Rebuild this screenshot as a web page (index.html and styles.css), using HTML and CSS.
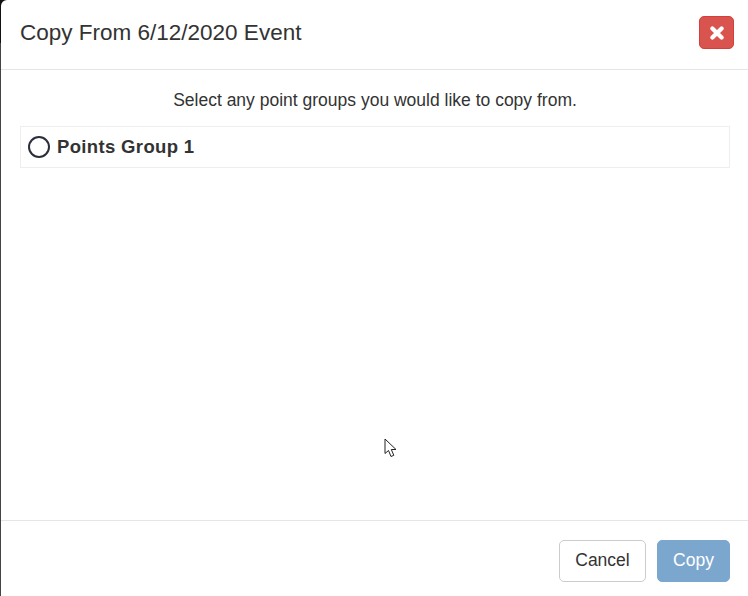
FILE: index.html
```html
<!DOCTYPE html>
<html lang="en">
<head>
    <meta charset="UTF-8">
    <title>Copy From Event</title>
    <link rel="stylesheet" href="styles.css">
</head>
<body>
    <div class="modal">
        <header class="modal-header">
            <h4 class="modal-title">Copy From 6/12/2020 Event</h4>
            <button class="btn-close" aria-label="Close">
                <svg width="14" height="14" viewBox="0 0 14 14">
                    <path d="M2.4 2.4 L11.6 11.6 M11.6 2.4 L2.4 11.6" stroke="#fff" stroke-width="4.2" stroke-linecap="round"/>
                </svg>
            </button>
        </header>

        <section class="modal-body">
            <p class="intro">Select any point groups you would like to copy from.</p>
            <div class="group-row">
                <span class="radio"></span>
                <span class="group-name">Points Group 1</span>
            </div>
        </section>

        <footer class="modal-footer">
            <button class="btn btn-default">Cancel</button>
            <button class="btn btn-primary">Copy</button>
        </footer>

        <!-- mouse pointer -->
        <svg class="cursor" width="14" height="21" viewBox="0 0 14 21">
            <path d="M1 1 L1 15.5 L4.5 12.5 L7 18.5 L9.8 17.3 L7.3 11.5 L12 11.5 Z" fill="#fff" stroke="#222" stroke-width="1" stroke-linejoin="miter"/>
        </svg>
    </div>
</body>
</html>
```

FILE: styles.css
```css
* {
    margin: 0;
    padding: 0;
    box-sizing: border-box;
    font-family: "Liberation Sans", Arial, sans-serif;
}

body {
    background: linear-gradient(#111 43px, #444 43px);
    height: 596px;
    overflow: hidden;
}

.modal {
    position: relative;
    display: flex;
    flex-direction: column;
    height: 596px;
    margin-left: 1px;
    background: #fff;
    border-top-left-radius: 6px;
    color: #333;
}

/* Header */
.modal-header {
    display: flex;
    justify-content: space-between;
    align-items: flex-start;
    height: 70px;
    padding: 16px 14px 0 19px;
    border-bottom: 1px solid #e5e5e5;
}

.modal-title {
    font-size: 22.5px;
    font-weight: 400;
    line-height: 34px;
}

.btn-close {
    display: flex;
    justify-content: center;
    align-items: center;
    width: 35px;
    height: 33px;
    background: #d9534f;
    border: 1px solid #d43f3a;
    border-radius: 5px;
}

/* Body */
.modal-body {
    flex: 1;
    padding: 20px 18px 0 19px;
}

.intro {
    font-size: 17.5px;
    line-height: 20px;
    text-align: center;
}

.group-row {
    display: flex;
    align-items: center;
    gap: 7px;
    height: 42px;
    margin-top: 16px;
    padding-left: 7px;
    border: 1px solid #eee;
}

.radio {
    width: 22px;
    height: 22px;
    border: 2px solid #2b2f3a;
    border-radius: 50%;
}

.group-name {
    font-size: 18.5px;
    font-weight: 700;
    letter-spacing: 0.35px;
}

/* Footer */
.modal-footer {
    display: flex;
    justify-content: flex-end;
    gap: 11px;
    height: 76px;
    padding: 19px 18px 0 0;
    border-top: 1px solid #e5e5e5;
}

.btn {
    height: 42px;
    padding-bottom: 2px;
    font-size: 17.5px;
    border-radius: 5px;
    border: 1px solid transparent;
}

.btn-default {
    width: 87px;
    background: #fff;
    border-color: #ccc;
    color: #333;
}

.btn-primary {
    width: 73px;
    background: #7ba7cf;
    border-color: #7ba7cf;
    color: #fff;
}

.cursor {
    position: absolute;
    left: 383px;
    top: 438px;
}
```
